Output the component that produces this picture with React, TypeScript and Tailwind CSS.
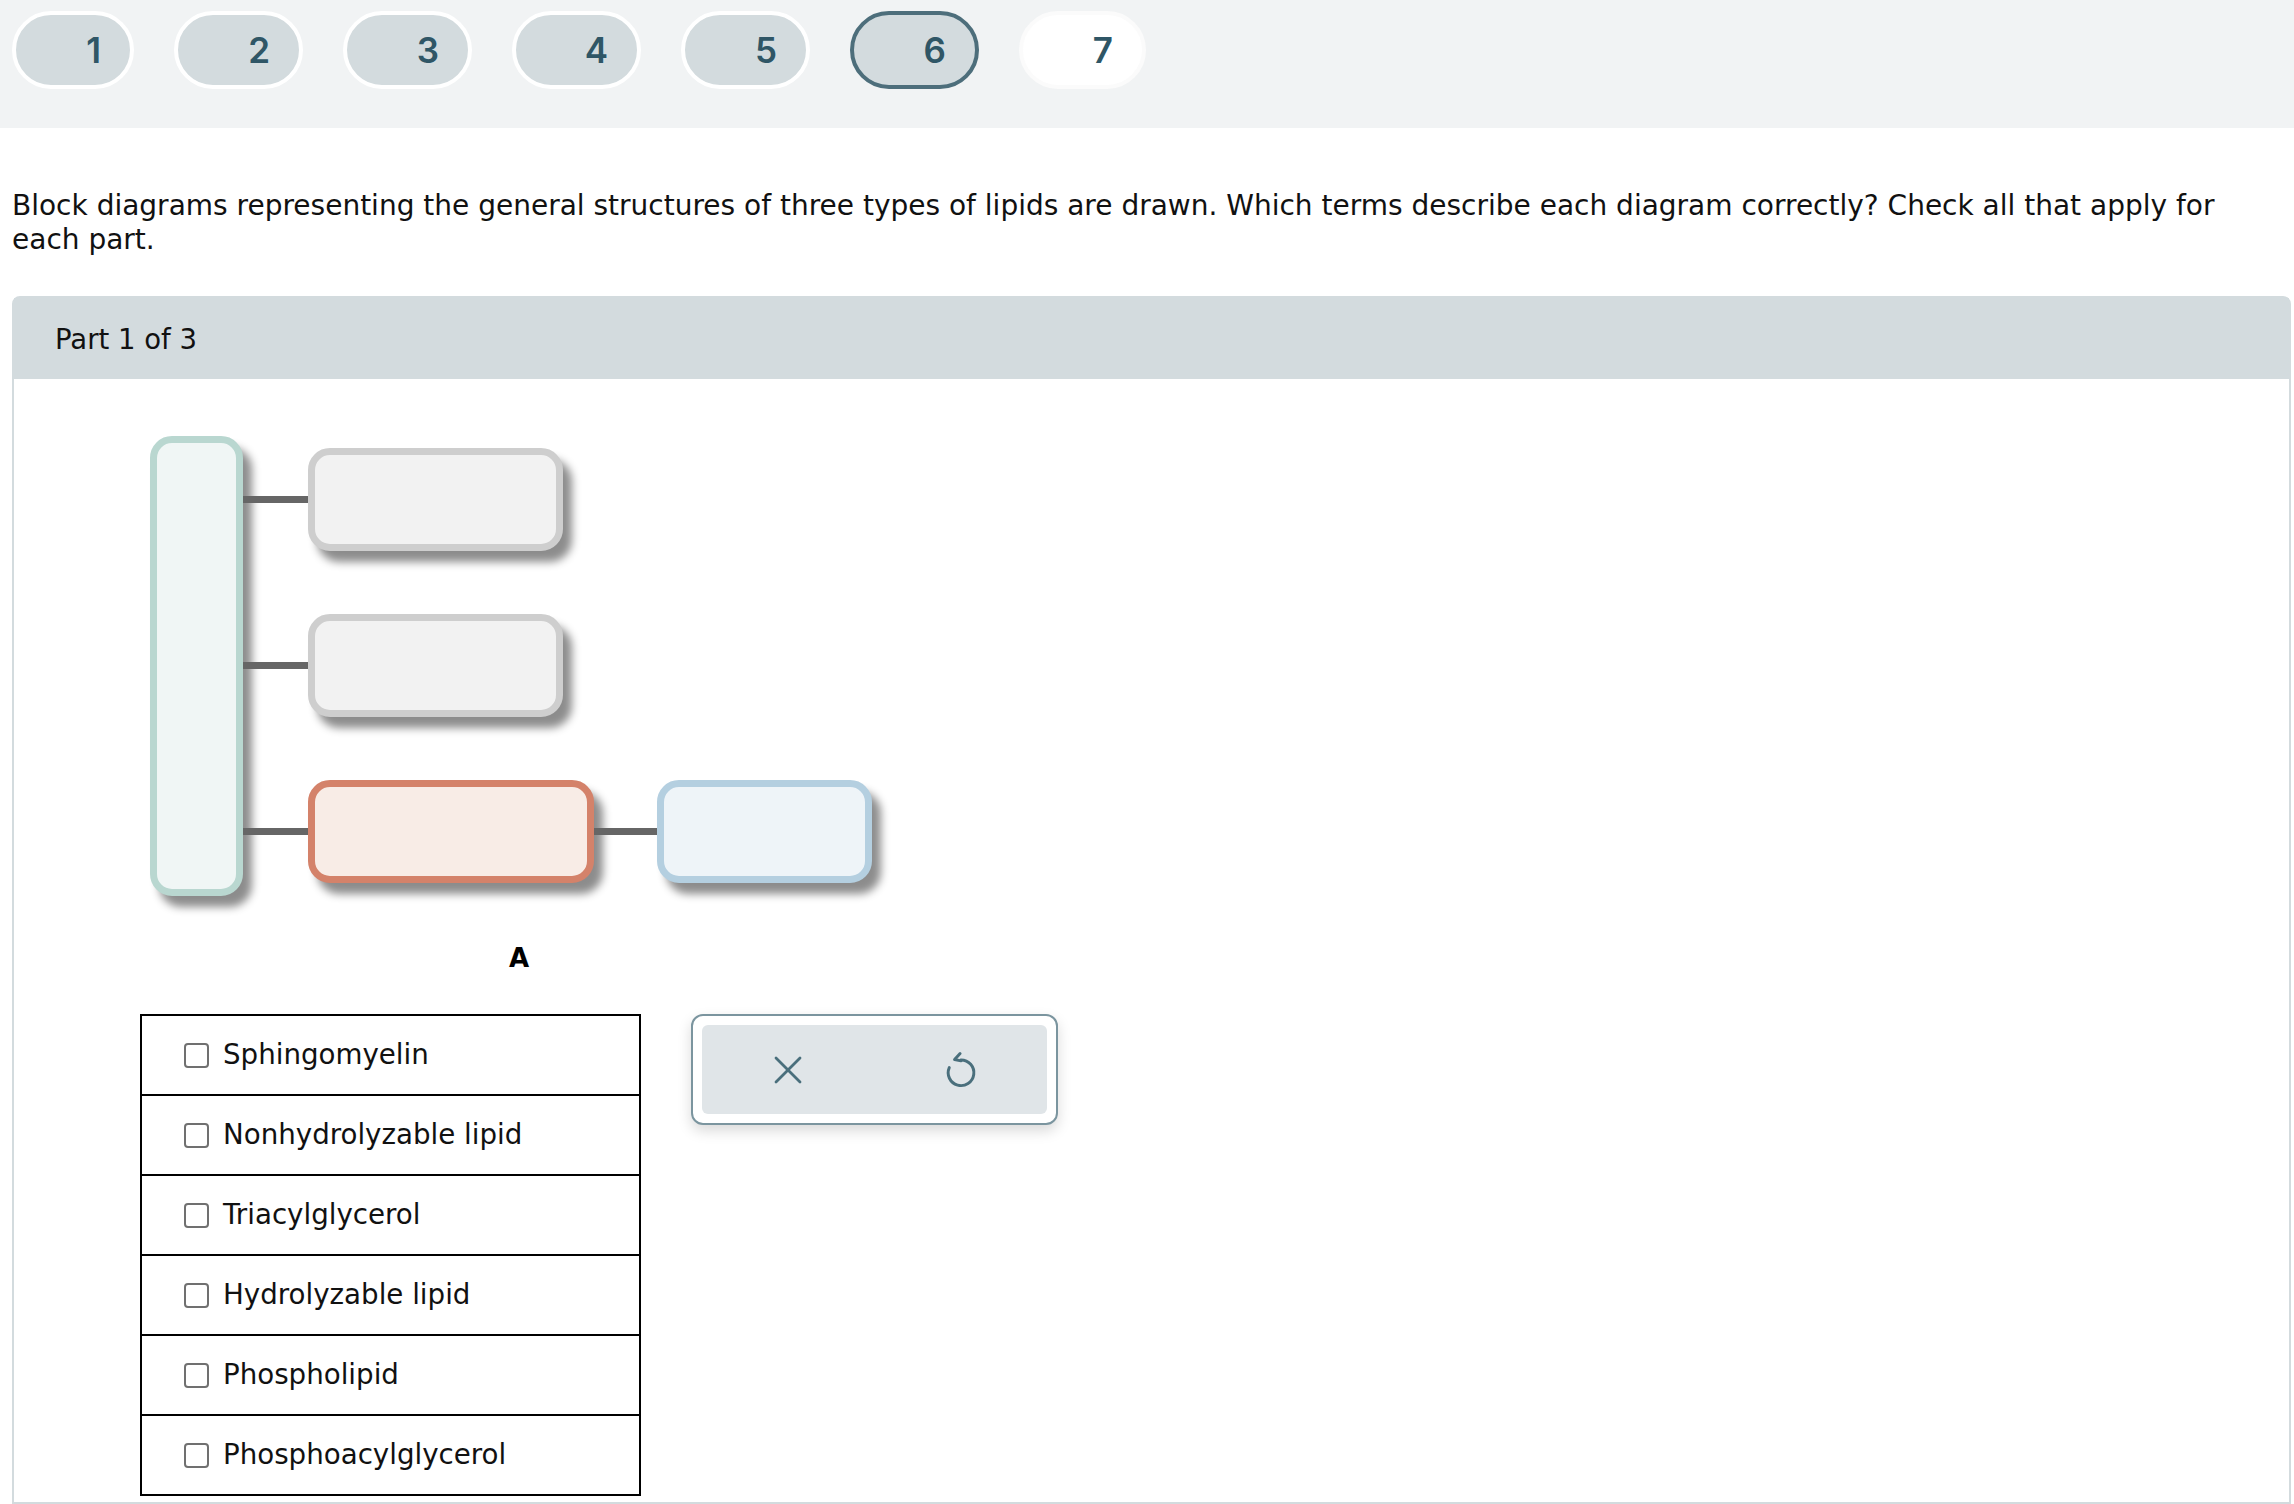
import { X } from 'lucide-react'

const steps = [
  { n: 1, w: 'w-[122px]', state: 'done' },
  { n: 2, w: 'w-[129px]', state: 'done' },
  { n: 3, w: 'w-[129px]', state: 'done' },
  { n: 4, w: 'w-[129px]', state: 'done' },
  { n: 5, w: 'w-[129px]', state: 'done' },
  { n: 6, w: 'w-[129px]', state: 'current' },
  { n: 7, w: 'w-[127px]', state: 'todo' },
] as const

const choices = [
  'Sphingomyelin',
  'Nonhydrolyzable lipid',
  'Triacylglycerol',
  'Hydrolyzable lipid',
  'Phospholipid',
  'Phosphoacylglycerol',
]

const blockShadow = 'shadow-[9px_11px_9px_rgba(0,0,0,0.45)]'

function StepPill({ n, w, state }: { n: number; w: string; state: string }) {
  const tone =
    state === 'current'
      ? 'border-[#4d6e7b] bg-[#d3dbde]'
      : state === 'todo'
        ? 'border-[#fbfbfb] bg-white'
        : 'border-white bg-[#d3dbde]'
  return (
    <button
      type="button"
      className={`flex h-[78px] ${w} shrink-0 items-center justify-end rounded-full border-4 pr-[29px] font-['Inter',sans-serif] text-[35px] font-semibold text-[#2f5666] ${tone}`}
    >
      {n}
    </button>
  )
}

function UndoIcon() {
  return (
    <svg
      width="44"
      height="44"
      viewBox="0 0 24 24"
      fill="none"
      stroke="currentColor"
      strokeWidth="1.6"
      strokeLinecap="round"
      strokeLinejoin="round"
      aria-hidden
    >
      <path d="M12 6.5A7 7 0 1 1 5.6 10.7" />
      <path d="M11.5 3 L8.5 6.3 L12 7" />
    </svg>
  )
}

function Block({ w, tone }: { w: string; tone: string }) {
  return <div className={`h-[103px] ${w} rounded-[22px] border-[7px] ${tone} ${blockShadow}`} />
}

function Bond({ w }: { w: string }) {
  return <div className={`h-[7px] ${w} shrink-0 bg-[#666666]`} />
}

// backbone on the left, three groups bonded to it; the last group carries a head group
function LipidDiagram() {
  return (
    <div className="flex items-start pl-[10px]">
      <div className={`mt-[6px] h-[460px] w-[93px] shrink-0 rounded-[22px] border-[7px] border-[#b9d7d0] bg-[#f0f6f5] ${blockShadow}`} />
      <div className="flex flex-col gap-[63px] pt-[18px]">
        <div className="flex items-center">
          <Bond w="w-[65px]" />
          <Block w="w-[255px]" tone="border-[#cecece] bg-[#f2f2f2]" />
        </div>
        <div className="flex items-center">
          <Bond w="w-[65px]" />
          <Block w="w-[255px]" tone="border-[#cecece] bg-[#f2f2f2]" />
        </div>
        <div className="flex items-center">
          <Bond w="w-[65px]" />
          <Block w="w-[286px]" tone="border-[#d4826a] bg-[#f8ece6]" />
          <Bond w="w-[63px]" />
          <Block w="w-[215px]" tone="border-[#b4cfe0] bg-[#eef4f8]" />
        </div>
      </div>
    </div>
  )
}

export default function App() {
  return (
    <div className="min-h-[1504px] bg-white font-['DejaVu_Sans','Liberation_Sans',sans-serif] text-[#111111]">
      <nav className="flex h-[128px] items-start gap-[40px] bg-[#f1f3f4] pl-[12px] pt-[11px]">
        {steps.map((s) => (
          <StepPill key={s.n} n={s.n} w={s.w} state={s.state} />
        ))}
      </nav>

      <main className="pl-[12px] pr-[3px]">
        <p className="mt-[61px] w-[2250px] text-[28px] leading-[34px]">
          Block diagrams representing the general structures of three types of lipids are drawn. Which terms describe
          each diagram correctly? Check all that apply for each part.
        </p>

        <section className="mt-[39px] h-[1208px] rounded-t-[8px] border-2 border-[#d3dbde]">
          <header className="flex h-[81px] items-center bg-[#d3dbde] pl-[41px] pt-[3px] text-[27.5px]">Part 1 of 3</header>

          <div className="flex flex-col pl-[126px]">
            <div className="mt-[51px]">
              <LipidDiagram />
            </div>

            <p className="mt-[49px] w-[758px] text-center text-[26px] font-bold leading-none text-black">A</p>

            <div className="mt-[43px] flex items-start gap-[50px]">
              <ul className="w-[501px] divide-y-2 divide-black border-2 border-black">
                {choices.map((c) => (
                  <li key={c} className="box-content flex h-[78px] items-center gap-[14px] pl-[42px] text-[27.7px]">
                    <span className="h-[25px] w-[25px] shrink-0 rounded-[4px] border-2 border-[#707070] bg-white" />
                    {c}
                  </li>
                ))}
              </ul>

              <div className="h-[111px] w-[367px] rounded-[12px] border-2 border-[#7b959f] bg-white p-[9px] shadow-[0_6px_14px_rgba(0,0,0,0.15)]">
                <div className="flex h-full rounded-[6px] bg-[#e0e5e8] text-[#4a6f7c]">
                  <button type="button" className="flex flex-1 items-center justify-center">
                    <X size={48} strokeWidth={1.4} />
                  </button>
                  <button type="button" className="flex flex-1 items-center justify-center">
                    <UndoIcon />
                  </button>
                </div>
              </div>
            </div>
          </div>
        </section>
      </main>
    </div>
  )
}
